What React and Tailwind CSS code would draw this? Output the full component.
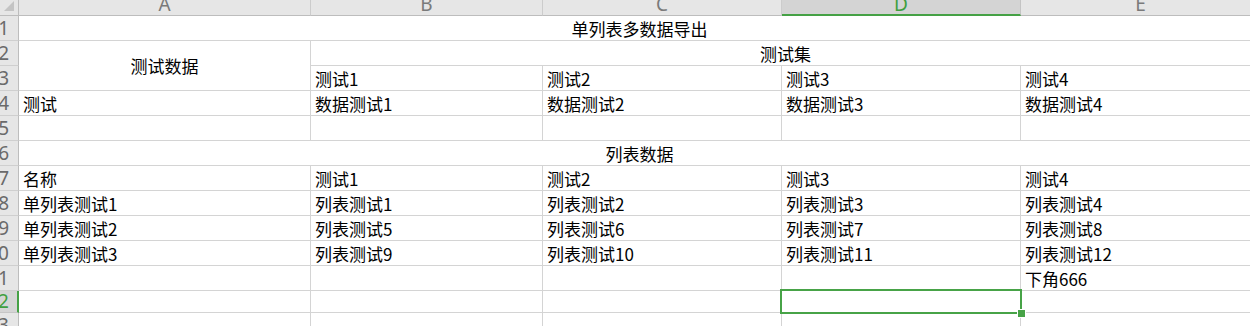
import React from "react";

const FONT = { fontFamily: '"Noto Sans CJK SC", "Noto Sans", sans-serif' };
const HEAD_FONT = { fontFamily: '"Noto Sans", "Noto Sans CJK SC", sans-serif' };

const cols = ["A", "B", "C", "D", "E"];

const base = "border-r border-b border-[#d4d4d4] bg-white flex items-center whitespace-nowrap text-[17px] text-black";
const cell = base + " overflow-hidden";
const left = "pl-[4px] pt-[1px]";
const center = "justify-center pt-[1px]";

function RowHead({ n, active }) {
  return (
    <div
      className={
        "flex items-center justify-end overflow-hidden whitespace-nowrap text-[19px] leading-none border-b " +
        (active
          ? "bg-[#d5d5d5] text-[#3f9f3f] border-r-2 border-r-[#45a145] border-b-[#c6c6c6] pr-[9px]"
          : "bg-[#e6e6e6] text-[#6a6a6a] border-r border-r-[#bdbdbd] border-b-[#cfcfcf] pr-[10px]")
      }
      style={HEAD_FONT}
    >
      <span className="-mr-[1px]">{n}</span>
    </div>
  );
}

function ColHead({ label, active }) {
  return (
    <div
      className={
        "flex justify-center overflow-hidden border-r text-[19px] leading-[20px] " +
        (active
          ? "bg-[#d4d4d4] text-[#3f9f3f] border-b-2 border-b-[#45a145] border-r-[#c4c4c4]"
          : "bg-[#e6e6e6] text-[#7a7a7a] border-b border-b-[#bdbdbd] border-r-[#cccccc]")
      }
      style={HEAD_FONT}
    >
      <span className="-mt-[6px]">{label}</span>
    </div>
  );
}

function Row({ n, values }) {
  return (
    <>
      <RowHead n={n} />
      {values.map((v, i) => (
        <div key={i} className={cell + " " + left}>
          {v}
        </div>
      ))}
    </>
  );
}

export default function App() {
  return (
    <div className="w-[1250px] h-[326px] overflow-hidden bg-white" style={FONT}>
      <div className="relative grid w-[1261px] grid-cols-[19px_292px_232px_239px_239px_240px] grid-rows-[16px_repeat(11,25px)_22px_25px]">
        {/* corner */}
        <div className="relative bg-[#e6e6e6] border-r border-b border-[#bdbdbd]">
          <svg className="absolute left-[3px] top-[1px]" width="12" height="11" viewBox="0 0 12 11">
            <polygon points="11,0 11,10 1,10" fill="#c4c4c4" />
          </svg>
        </div>
        {cols.map((c) => (
          <ColHead key={c} label={c} active={c === "D"} />
        ))}

        {/* 1 */}
        <RowHead n={1} />
        <div className={cell + " col-span-5 " + center}>单列表多数据导出</div>

        {/* 2 + 3 */}
        <RowHead n={2} />
        <div className={cell + " row-span-2 " + center}>测试数据</div>
        <div className={cell + " col-span-4 " + center}>测试集</div>
        <RowHead n={3} />
        {["测试1", "测试2", "测试3", "测试4"].map((v) => (
          <div key={v} className={cell + " " + left}>
            {v}
          </div>
        ))}

        {/* 4 */}
        <Row n={4} values={["测试", "数据测试1", "数据测试2", "数据测试3", "数据测试4"]} />
        {/* 5 */}
        <Row n={5} values={["", "", "", "", ""]} />

        {/* 6 */}
        <RowHead n={6} />
        <div className={cell + " col-span-5 " + center}>列表数据</div>

        <Row n={7} values={["名称", "测试1", "测试2", "测试3", "测试4"]} />
        <Row n={8} values={["单列表测试1", "列表测试1", "列表测试2", "列表测试3", "列表测试4"]} />
        <Row n={9} values={["单列表测试2", "列表测试5", "列表测试6", "列表测试7", "列表测试8"]} />
        <Row n={10} values={["单列表测试3", "列表测试9", "列表测试10", "列表测试11", "列表测试12"]} />
        <Row n={11} values={["", "", "", "", "下角666"]} />

        {/* 12: active row */}
        <RowHead n={12} active />
        <div className={cell} />
        <div className={cell} />
        <div className={cell} />
        <div className={cell} />
        <div className={cell} />

        <Row n={13} values={["", "", "", "", ""]} />

        {/* selection frame over D12 with its fill handle */}
        <div className="absolute left-[780px] top-[289px] w-[242px] h-[25px] shadow-[inset_0_0_0_2px_#47a347] pointer-events-none">
          <div className="absolute right-[-3px] bottom-[-3px] w-[7px] h-[7px] bg-[#47a347] shadow-[0_0_0_1px_#ffffff]" />
        </div>
      </div>
    </div>
  );
}
